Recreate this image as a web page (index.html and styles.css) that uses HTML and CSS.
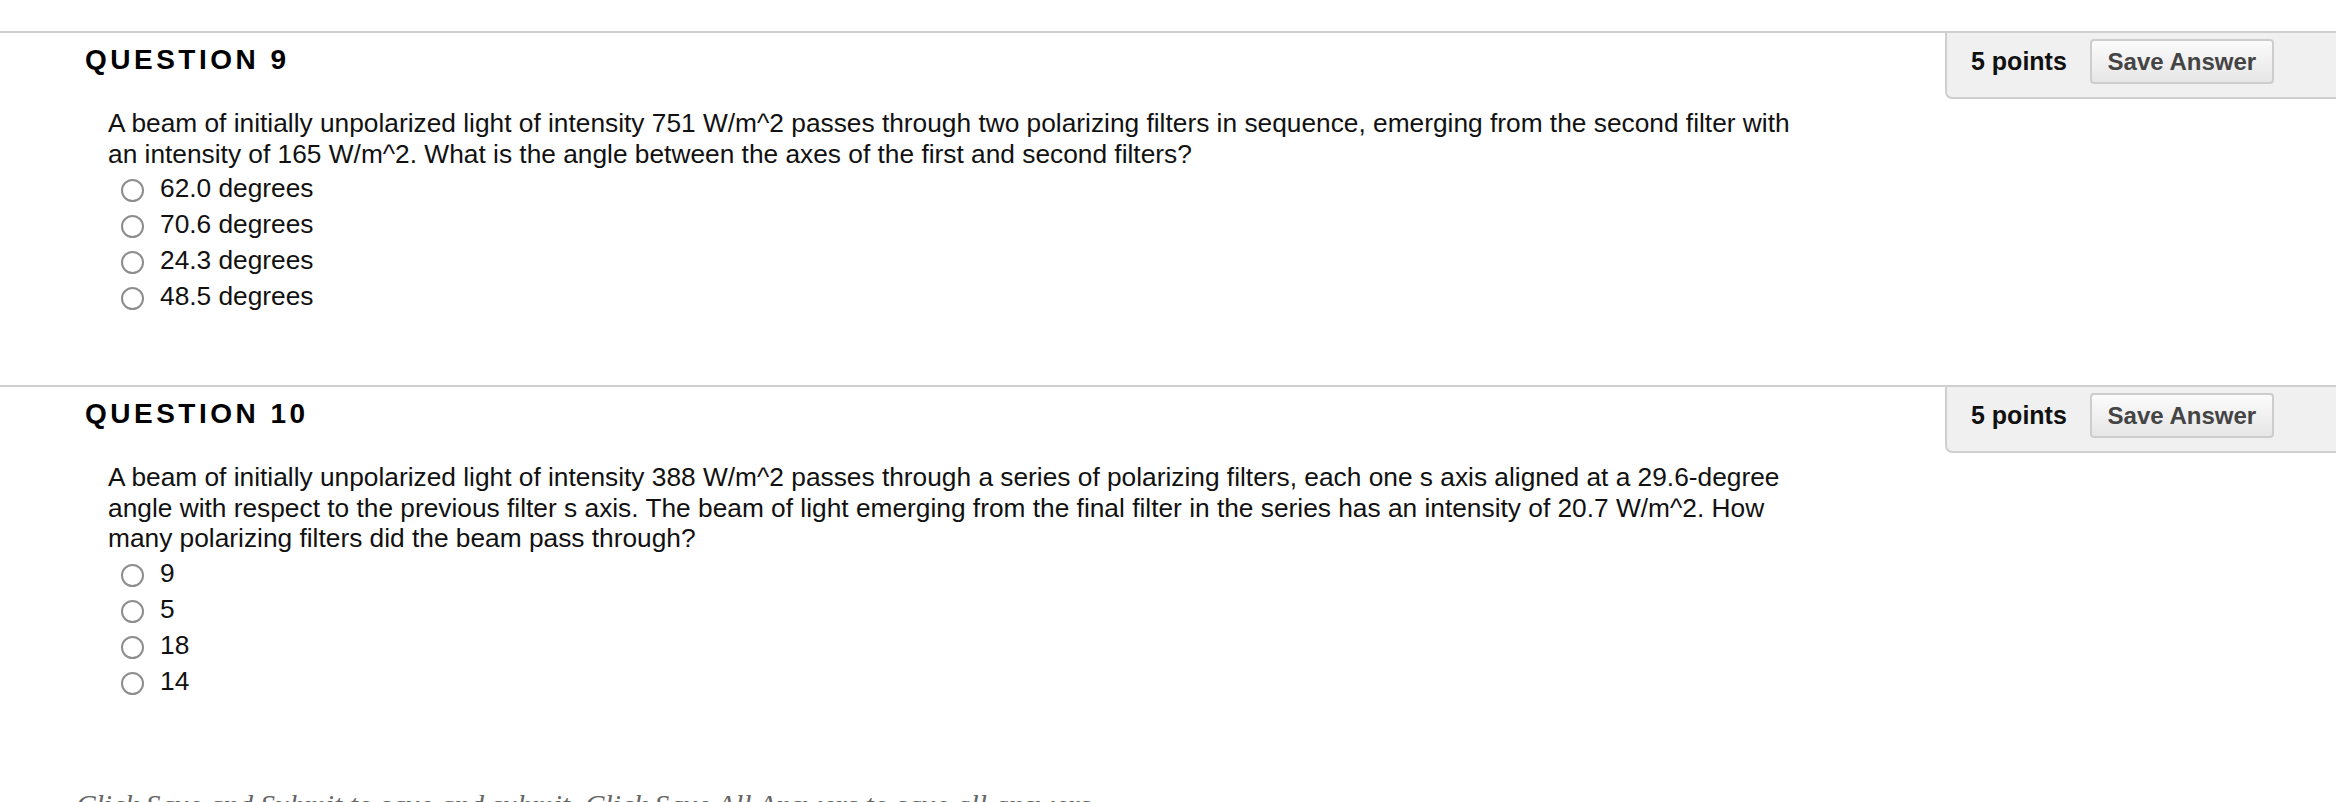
FILE: index.html
```html
<!DOCTYPE html>
<html lang="en">
<head>
<meta charset="utf-8">
<title>Questions</title>
<link rel="stylesheet" href="styles.css">
</head>
<body>
<div class="page">
  <section class="question">
    <div class="q-main">
      <h3 class="q-title">QUESTION 9</h3>
      <div class="q-body">
        <p class="q-text">A beam of initially unpolarized light of intensity 751 W/m^2 passes through two polarizing filters in sequence, emerging from the second filter with an intensity of 165 W/m^2. What is the angle between the axes of the first and second filters?</p>
        <ul class="options">
          <li class="option"><span class="radio"></span><span class="opt-label">62.0 degrees</span></li>
          <li class="option"><span class="radio"></span><span class="opt-label">70.6 degrees</span></li>
          <li class="option"><span class="radio"></span><span class="opt-label">24.3 degrees</span></li>
          <li class="option"><span class="radio"></span><span class="opt-label">48.5 degrees</span></li>
        </ul>
      </div>
    </div>
    <div class="points-box">
      <span class="points">5 points</span>
      <button class="save-btn" type="button">Save Answer</button>
    </div>
  </section>

  <section class="question">
    <div class="q-main">
      <h3 class="q-title">QUESTION 10</h3>
      <div class="q-body">
        <p class="q-text">A beam of initially unpolarized light of intensity 388 W/m^2 passes through a series of polarizing filters, each one s axis aligned at a 29.6-degree angle with respect to the previous filter s axis. The beam of light emerging from the final filter in the series has an intensity of 20.7 W/m^2. How many polarizing filters did the beam pass through?</p>
        <ul class="options">
          <li class="option"><span class="radio"></span><span class="opt-label">9</span></li>
          <li class="option"><span class="radio"></span><span class="opt-label">5</span></li>
          <li class="option"><span class="radio"></span><span class="opt-label">18</span></li>
          <li class="option"><span class="radio"></span><span class="opt-label">14</span></li>
        </ul>
      </div>
    </div>
    <div class="points-box">
      <span class="points">5 points</span>
      <button class="save-btn" type="button">Save Answer</button>
    </div>
  </section>

  <p class="footer-note">Click Save and Submit to save and submit. Click Save All Answers to save all answers.</p>
</div>
</body>
</html>
```

FILE: styles.css
```css
html, body {
  margin: 0;
  padding: 0;
  background: #ffffff;
}

body {
  font-family: "Liberation Sans", Arial, Helvetica, sans-serif;
  color: #111111;
  overflow: hidden;
}

.page {
  padding-top: 31px;
  margin-right: 14px;
}

.question {
  display: flex;
  align-items: flex-start;
  justify-content: space-between;
  border-top: 2px solid #cfcfcf;
  padding-bottom: 71px;
}

.q-main {
  flex: 1 1 auto;
  padding-left: 85px;
  padding-top: 11px;
}

.q-title {
  margin: 0;
  font-size: 28px;
  line-height: 32px;
  font-weight: bold;
  letter-spacing: 3.5px;
  color: #000000;
}

.q-body {
  margin-top: 32px;
  padding-left: 23px;
  width: 1700px;
}

.q-text {
  margin: 0;
  font-size: 26.3px;
  line-height: 30.5px;
  color: #111111;
}

.options {
  list-style: none;
  margin: 1px 0 0;
  padding: 0;
}

.option {
  display: flex;
  align-items: flex-start;
  height: 36px;
  padding-left: 13px;
}

.radio {
  flex: none;
  width: 23px;
  height: 23px;
  margin-top: 9px;
  margin-right: 16px;
  box-sizing: border-box;
  border: 2px solid #8d8d8d;
  border-radius: 50%;
  background: #ffffff;
}

.opt-label {
  font-size: 26.3px;
  line-height: 36px;
}

.points-box {
  flex: none;
  width: 391px;
  box-sizing: border-box;
  display: flex;
  align-items: center;
  padding: 6px 0 13px 24px;
  background: #f0f0f0;
  border-left: 2px solid #cfcfcf;
  border-bottom: 2px solid #cfcfcf;
  border-bottom-left-radius: 7px;
}

.points {
  font-size: 25px;
  font-weight: bold;
  color: #111111;
  margin-right: 23px;
}

.save-btn {
  width: 184px;
  height: 45px;
  padding: 0;
  box-sizing: border-box;
  border: 2px solid #cdcdcd;
  border-radius: 4px;
  background: linear-gradient(#fbfbfb, #e6e6e6);
  font-family: "Liberation Sans", Arial, Helvetica, sans-serif;
  font-size: 24px;
  font-weight: bold;
  color: #444444;
}

.footer-note {
  margin: 20px 0 0 76px;
  font-family: "Liberation Serif", "Times New Roman", serif;
  font-style: italic;
  font-size: 29.5px;
  line-height: 30px;
  color: #666666;
  white-space: nowrap;
}
```
